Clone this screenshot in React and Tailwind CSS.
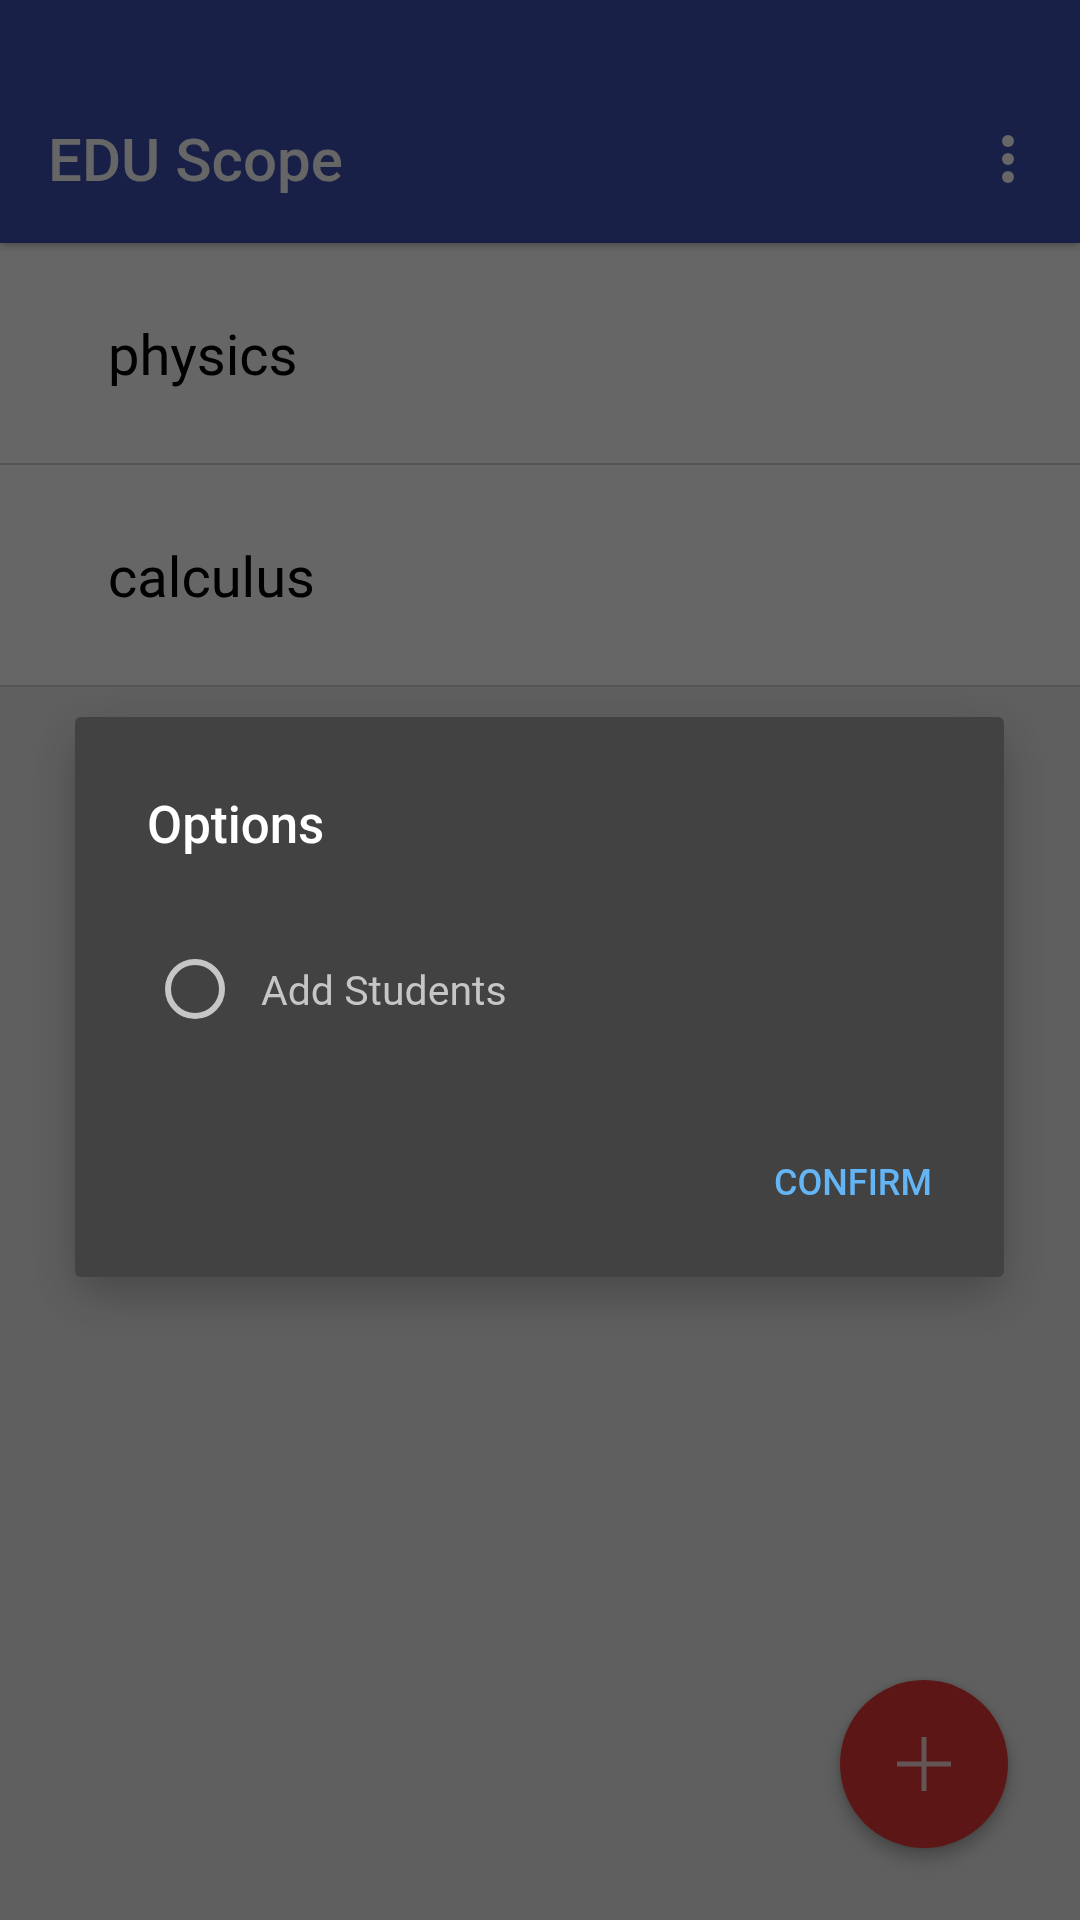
import { useState } from 'react';

const courses = ['physics', 'calculus'];

function MoreIcon() {
  return (
    <svg width="12" height="48" viewBox="0 0 12 48" fill="currentColor" aria-hidden="true">
      <circle cx="6" cy="6" r="6" />
      <circle cx="6" cy="24" r="6" />
      <circle cx="6" cy="42" r="6" />
    </svg>
  );
}

function AppBar({ title }) {
  return (
    <header className="relative bg-[#3f51b5] pt-[72px] shadow-[0_2px_8px_rgba(0,0,0,0.3)]">
      <div className="flex h-[171px] items-center justify-between pt-[3px] pr-[46px] pl-12">
        <h1 className="pt-[3px] text-[60px] leading-[72px] font-medium text-white">{title}</h1>
        <button type="button" aria-label="More options" className="px-5 py-3 text-white">
          <MoreIcon />
        </button>
      </div>
    </header>
  );
}

function CourseList({ items }) {
  return (
    <ul className="bg-white">
      {items.map((name) => (
        <li key={name} className="border-b-2 border-[#d4d4d4]">
          <a href={`#${name}`} className="block px-[108px] pt-[83px] pb-[77px] text-[56px] leading-[60px] text-black">
            {name}
          </a>
        </li>
      ))}
    </ul>
  );
}

function AddButton() {
  return (
    <button
      type="button"
      aria-label="Add course"
      className="fixed right-[72px] bottom-[72px] flex size-[168px] items-center justify-center rounded-full bg-[#e53935] text-[#fbd7d6] shadow-[0_10px_18px_rgba(0,0,0,0.25),0_0_6px_rgba(0,0,0,0.15)]"
    >
      <svg width="54" height="54" viewBox="0 0 54 54" stroke="currentColor" strokeWidth="5" aria-hidden="true">
        <path d="M27 0v54M0 27h54" />
      </svg>
    </button>
  );
}

function OptionsDialog({ onConfirm }) {
  const [option, setOption] = useState('');

  return (
    <div className="fixed inset-0 flex items-center justify-center bg-black/60 pt-[74px] pr-[76px] pl-[75px]">
      <div
        role="dialog"
        aria-modal="true"
        aria-labelledby="options-title"
        className="w-full rounded-md bg-[#424242] px-[72px] pt-[77px] pb-10 shadow-[0_18px_50px_rgba(0,0,0,0.25)]"
      >
        <h2 id="options-title" className="text-[51px] leading-[64px] font-medium text-white">
          Options
        </h2>
        <label className="mt-[83px] flex h-24 items-center gap-9 pl-[18px] text-[41px] leading-[60px] text-[#c6c6c6]">
          <input
            type="radio"
            name="option"
            value="students"
            checked={option === 'students'}
            onChange={(e) => setOption(e.target.value)}
            className="size-[60px] appearance-none rounded-full border-6 border-[#c6c6c6] checked:bg-[#64b5f6]"
          />
          <span className="pt-1">Add Students</span>
        </label>
        <div className="mt-[92px] flex justify-end">
          <button type="button" onClick={onConfirm} className="text-[36px] leading-[108px] font-medium text-[#64b5f6]">
            CONFIRM
          </button>
        </div>
      </div>
    </div>
  );
}

export default function App() {
  const [open, setOpen] = useState(true);

  return (
    <div className="min-h-screen bg-[#eeeeee] font-[Roboto,sans-serif]">
      <AppBar title="EDU Scope" />
      <main>
        <CourseList items={courses} />
        <AddButton />
      </main>
      {open && <OptionsDialog onConfirm={() => setOpen(false)} />}
    </div>
  );
}
